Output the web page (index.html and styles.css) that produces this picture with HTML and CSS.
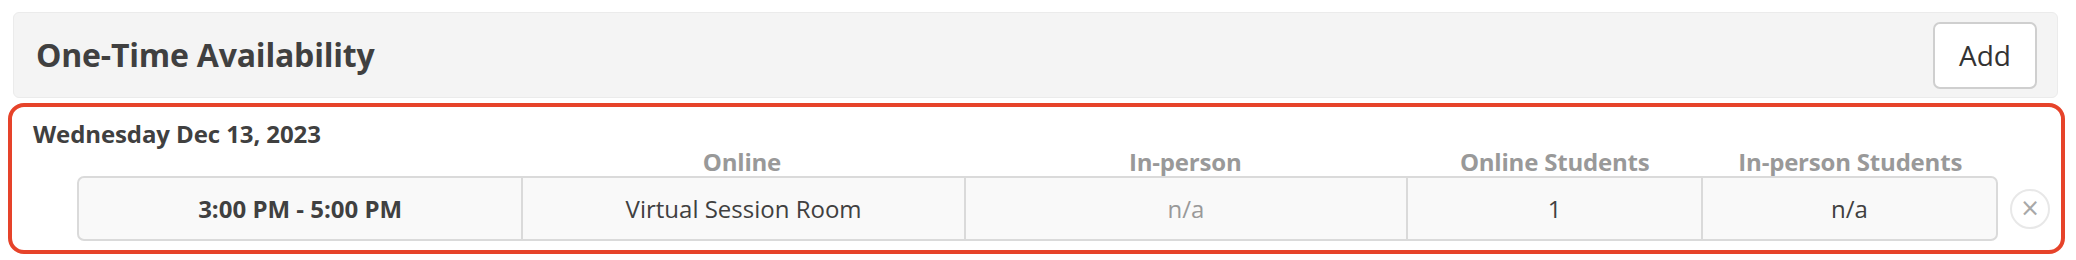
FILE: index.html
```html
<!DOCTYPE html>
<html lang="en">
<head>
<meta charset="utf-8">
<title>One-Time Availability</title>
<link rel="stylesheet" href="styles.css">
</head>
<body>
<div class="wrap">
  <div class="panel">
    <h2 class="panel-title">One-Time Availability</h2>
    <button class="btn-add" type="button">Add</button>
  </div>
  <section class="day">
    <div class="day-title">Wednesday Dec 13, 2023</div>
    <div class="slots">
      <div class="cols">
        <div class="col-head"></div>
        <div class="col-head">Online</div>
        <div class="col-head">In-person</div>
        <div class="col-head">Online Students</div>
        <div class="col-head">In-person Students</div>
      </div>
      <div class="line">
        <div class="row">
          <div class="cell cell-time">3:00 PM - 5:00 PM</div>
          <div class="cell">Virtual Session Room</div>
          <div class="cell cell-muted">n/a</div>
          <div class="cell">1</div>
          <div class="cell">n/a</div>
        </div>
        <button class="btn-close" type="button" aria-label="Remove">&#215;</button>
      </div>
    </div>
  </section>
</div>
</body>
</html>
```

FILE: styles.css
```css
html, body {
  margin: 0;
  padding: 0;
  background: #ffffff;
}

body {
  font-family: "Open Sans", "Liberation Sans", sans-serif;
  color: #404040;
}

.wrap {
  padding: 12px 11px 0 8px;
}

.panel {
  margin: 0 7px 0 5px;
  height: 86px;
  box-sizing: border-box;
  background: #f4f4f4;
  border: 1px solid #ebebeb;
  border-radius: 6px;
  display: flex;
  align-items: center;
  justify-content: space-between;
  padding: 0 20px 0 22px;
}

.panel-title {
  margin: 0;
  font-size: 32px;
  font-weight: 700;
  color: #404040;
  line-height: 40px;
  letter-spacing: -0.2px;
}

.btn-add {
  width: 104px;
  height: 67px;
  box-sizing: border-box;
  background: #ffffff;
  border: 2px solid #cfcfcf;
  border-radius: 7px;
  font-family: "Open Sans", "Liberation Sans", sans-serif;
  font-size: 28px;
  color: #333333;
  padding: 0;
}

.day {
  margin-top: 5px;
  border: 4px solid #e6432a;
  border-radius: 16px;
  padding: 11px 11px 9px 21px;
}

.day-title {
  font-size: 24px;
  font-weight: 700;
  line-height: 32px;
  color: #404040;
  letter-spacing: -0.1px;
}

.slots {
  margin-left: 44px;
}

.cols {
  display: grid;
  grid-template-columns: 3fr 3fr 3fr 2fr 2fr;
  margin-right: 52px;
  height: 26px;
}

.col-head {
  text-align: center;
  font-size: 24px;
  font-weight: 700;
  color: #999999;
  line-height: 24px;
  letter-spacing: -0.2px;
}

.line {
  display: flex;
  align-items: center;
  gap: 12px;
}

.row {
  flex: 1;
  display: grid;
  grid-template-columns: 3fr 3fr 3fr 2fr 2fr;
  height: 65px;
  box-sizing: border-box;
  background: #f9f9f9;
  border: 2px solid #dadada;
  border-radius: 7px;
}

.cell {
  display: flex;
  align-items: center;
  justify-content: center;
  font-size: 24px;
  color: #404040;
  border-left: 2px solid #dadada;
}

.cell:first-child {
  border-left: 0;
}

.cell-time {
  font-weight: 700;
}

.cell-muted {
  color: #999999;
}

.btn-close {
  width: 40px;
  height: 40px;
  box-sizing: border-box;
  border-radius: 50%;
  border: 2px solid #e8e8e8;
  background: #ffffff;
  color: #a8a8a8;
  font-family: "DejaVu Sans", sans-serif;
  font-size: 24px;
  line-height: 1;
  padding: 0 0 2px 0;
  display: flex;
  align-items: center;
  justify-content: center;
}
```
